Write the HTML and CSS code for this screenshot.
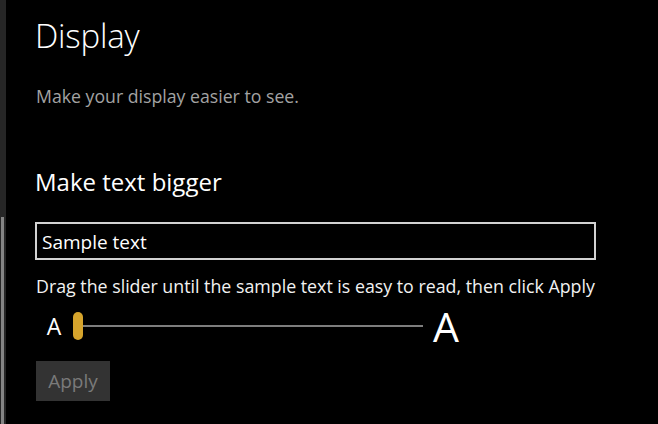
FILE: index.html
```html
<!DOCTYPE html>
<html lang="en">
<head>
<meta charset="utf-8">
<title>Display</title>
<link rel="stylesheet" href="styles.css">
</head>
<body>
<div class="window">
  <div class="rail">
    <div class="rail-track"></div>
    <div class="rail-thumb"></div>
  </div>
  <main class="page">
    <h1 class="page-title">Display</h1>
    <p class="page-desc">Make your display easier to see.</p>
    <h2 class="section-title">Make text bigger</h2>
    <div class="sample-box">Sample text</div>
    <p class="hint">Drag the slider until the sample text is easy to read, then click Apply</p>
    <div class="scale-row">
      <span class="scale-small">A</span>
      <div class="slider">
        <span class="slider-thumb"></span>
        <span class="slider-track"></span>
      </div>
      <span class="scale-big">A</span>
    </div>
    <button class="apply-btn" type="button" disabled>Apply</button>
  </main>
</div>
</body>
</html>
```

FILE: styles.css
```css
html, body {
  margin: 0;
  padding: 0;
  background: #000;
  height: 100%;
}

body {
  font-family: "Open Sans", "Noto Sans", sans-serif;
  color: #fff;
  overflow: hidden;
}

.window {
  display: flex;
  height: 424px;
}

/* navigation pane scrollbar on the left edge */
.rail {
  width: 6px;
  background: #262626;
  display: flex;
  flex-direction: column;
  padding-left: 1px;
  box-sizing: border-box;
}

.rail-track {
  height: 217px;
}

.rail-thumb {
  flex: 1;
  width: 3px;
  background: #858585;
}

.page {
  flex: 1;
  padding-left: 29px;
}

.page-title {
  margin: 13px 0 0;
  font-weight: 300;
  font-size: 33px;
  line-height: 45px;
  letter-spacing: -0.2px;
}

.page-desc {
  margin: 26px 0 0;
  padding-left: 1px;
  font-size: 17.7px;
  line-height: 24px;
  color: #a3a3a3;
}

.section-title {
  margin: 57px 0 0;
  font-weight: 400;
  font-size: 24px;
  line-height: 33px;
}

.sample-box {
  margin-top: 24px;
  width: 561px;
  height: 38px;
  box-sizing: border-box;
  border: 2px solid #d2d2d2;
  padding: 5px 0 0 5px;
  font-size: 19px;
  line-height: 27px;
}

.hint {
  margin: 14px 0 0;
  padding-left: 1px;
  font-size: 17.8px;
  line-height: 24px;
  color: #f2f2f2;
}

.scale-row {
  display: flex;
  align-items: center;
  height: 40px;
  margin-top: 8px;
}

.scale-small {
  width: 38px;
  text-align: center;
  font-size: 23px;
}

.slider {
  display: flex;
  align-items: center;
  width: 350px;
}

.slider-thumb {
  flex: none;
  width: 10px;
  height: 28px;
  border-radius: 5px;
  background: #d6a42c;
}

.slider-track {
  flex: 1;
  height: 2px;
  background: #7d7d7d;
}

.scale-big {
  margin-left: 10px;
  font-size: 41px;
}

.apply-btn {
  display: block;
  margin-top: 15px;
  margin-left: 1px;
  width: 74px;
  height: 40px;
  border: 0;
  padding: 0;
  background: #333;
  color: #7a7a7a;
  font-family: inherit;
  font-size: 19px;
}
```
